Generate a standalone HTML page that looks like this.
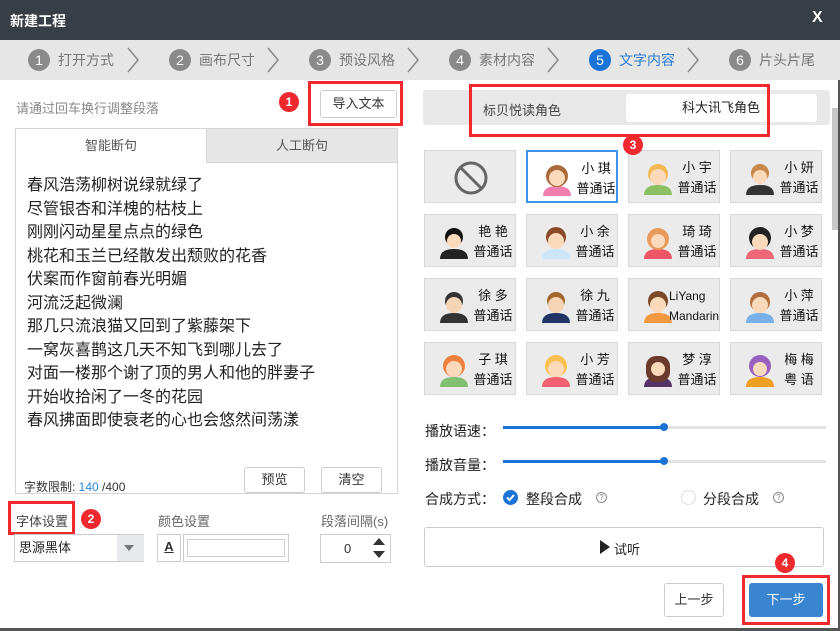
<!DOCTYPE html><html><head><meta charset="utf-8"><style>
*{margin:0;padding:0;box-sizing:border-box}
body{width:840px;height:631px;position:relative;background:#fff;font-family:"Liberation Sans","Noto Sans CJK SC",sans-serif;font-size:13px;color:#333;overflow:hidden}
.a{position:absolute}
.step{position:absolute;top:49px;height:22px;line-height:22px;color:#777;font-size:14px}
.step b{display:inline-block;width:22px;height:22px;border-radius:50%;background:#8a8a8a;color:#fff;text-align:center;font-weight:normal;margin-right:8px;font-size:14px}
.chev{position:absolute;top:47px;width:14px;height:26px}
.btn{position:absolute;border:1px solid #ccc;border-radius:3px;background:#fff;text-align:center;color:#333;font-size:13px}
.red{position:absolute;border:3px solid #f0292f}
.badge{position:absolute;width:20px;height:20px;border-radius:50%;background:#f0292f;color:#fff;text-align:center;line-height:20px;font-size:12px;font-weight:bold}
.cell{position:absolute;width:92px;height:53px;background:#ebebeb;border:1px solid #d6d8de}
.cell svg{position:absolute;left:12px;top:8px}
.cell .t{position:absolute;left:48px;top:7px;font-size:13px;line-height:20px;color:#111;text-align:center;width:40px}
.lines div{height:23.5px;line-height:23.5px;font-size:16px;color:#222}
</style></head><body>
<div class="a" style="left:0;top:0;width:840px;height:40px;background:#383e46"></div>
<div class="a" style="left:10px;top:11px;color:#fff;font-weight:bold;font-size:14px">新建工程</div>
<div class="a" style="left:812px;top:9px;color:#fff;font-weight:bold;font-size:16px">X</div>
<div class="a" style="left:0;top:40px;width:840px;height:40px;background:#e6e6e6"></div>
<div class="step" style="left:28px"><b>1</b>打开方式</div>
<div class="step" style="left:169px"><b>2</b>画布尺寸</div>
<div class="step" style="left:309px"><b>3</b>预设风格</div>
<div class="step" style="left:449px"><b>4</b>素材内容</div>
<div class="step" style="left:589px;color:#2a7ad0"><b style="background:#1a73d6">5</b>文字内容</div>
<div class="step" style="left:729px"><b>6</b>片头片尾</div>
<svg class="chev" style="left:126px" viewBox="0 0 14 26"><path d="M2 1L12 13L2 25" fill="none" stroke="#888" stroke-width="1.5"/></svg>
<svg class="chev" style="left:266px" viewBox="0 0 14 26"><path d="M2 1L12 13L2 25" fill="none" stroke="#888" stroke-width="1.5"/></svg>
<svg class="chev" style="left:406px" viewBox="0 0 14 26"><path d="M2 1L12 13L2 25" fill="none" stroke="#888" stroke-width="1.5"/></svg>
<svg class="chev" style="left:546px" viewBox="0 0 14 26"><path d="M2 1L12 13L2 25" fill="none" stroke="#888" stroke-width="1.5"/></svg>
<svg class="chev" style="left:686px" viewBox="0 0 14 26"><path d="M2 1L12 13L2 25" fill="none" stroke="#888" stroke-width="1.5"/></svg>

<div class="a" style="left:16px;top:98px;color:#888">请通过回车换行调整段落</div>
<div class="badge" style="left:279px;top:92px">1</div>
<div class="btn" style="left:320px;top:90px;width:77px;height:28px;line-height:26px">导入文本</div>
<div class="red" style="left:308px;top:81px;width:95px;height:45px"></div>

<div class="a" style="left:15px;top:128px;width:383px;height:366px;border:1px solid #d5d5d5"></div>
<div class="a" style="left:206px;top:129px;width:191px;height:34px;background:#e6e6e6;border-left:1px solid #d5d5d5;border-bottom:1px solid #d5d5d5;text-align:center;line-height:34px;color:#555">人工断句</div>
<div class="a" style="left:16px;top:129px;width:190px;height:34px;text-align:center;line-height:34px;color:#555">智能断句</div>
<div class="a lines" style="left:27px;top:174px">
<div>春风浩荡柳树说绿就绿了</div><div>尽管银杏和洋槐的枯枝上</div><div>刚刚闪动星星点点的绿色</div><div>桃花和玉兰已经散发出颓败的花香</div><div>伏案而作窗前春光明媚</div><div>河流泛起微澜</div><div>那几只流浪猫又回到了紫藤架下</div><div>一窝灰喜鹊这几天不知飞到哪儿去了</div><div>对面一楼那个谢了顶的男人和他的胖妻子</div><div>开始收拾闲了一冬的花园</div><div>春风拂面即使衰老的心也会悠然间荡漾</div></div>
<div class="a" style="left:24px;top:478px;font-size:12px">字数限制: <span style="color:#2a8ae0">140</span> /400</div>
<div class="btn" style="left:244px;top:467px;width:61px;height:26px;line-height:24px">预览</div>
<div class="btn" style="left:321px;top:467px;width:61px;height:26px;line-height:24px">清空</div>

<div class="a" style="left:16px;top:511px;color:#444">字体设置</div>
<div class="red" style="left:8px;top:501px;width:67px;height:34px"></div>
<div class="badge" style="left:81px;top:509px">2</div>
<div class="a" style="left:158px;top:511px;color:#666">颜色设置</div>
<div class="a" style="left:321px;top:511px;color:#666">段落间隔(s)</div>
<div class="a" style="left:14px;top:534px;width:130px;height:28px;border:1px solid #ccc;background:#fff;line-height:26px;padding-left:4px;color:#222">思源黑体</div>
<div class="a" style="left:117px;top:535px;width:27px;height:26px;background:#e8e9ec"></div>
<div class="a" style="left:124px;top:545px;border:5px solid transparent;border-top:6px solid #777"></div>
<div class="a" style="left:157px;top:534px;width:24px;height:28px;border:1px solid #ccc;text-align:center;line-height:24px;font-weight:bold;text-decoration:underline;color:#333">A</div>
<div class="a" style="left:183px;top:534px;width:106px;height:28px;border:1px solid #ccc"></div>
<div class="a" style="left:187px;top:539px;width:98px;height:18px;border:1px solid #ccc"></div>
<div class="a" style="left:320px;top:534px;width:71px;height:29px;border:1px solid #ccc"></div>
<div class="a" style="left:344px;top:541px">0</div>
<div class="a" style="left:373px;top:538px;border:6px solid transparent;border-bottom:7px solid #333;border-top:0"></div>
<div class="a" style="left:373px;top:551px;border:6px solid transparent;border-top:7px solid #333;border-bottom:0"></div>

<!-- right -->
<div class="a" style="left:423px;top:90px;width:407px;height:35px;background:#e8e8e8;border-radius:3px"></div>
<div class="a" style="left:483px;top:100px;color:#444">标贝悦读角色</div>
<div class="a" style="left:626px;top:94px;width:191px;height:28px;background:#fff;border-radius:3px;text-align:right;padding-right:57px;line-height:28px;color:#222">科大讯飞角色</div>
<div class="red" style="left:469px;top:84px;width:301px;height:53px"></div>
<div class="a" style="left:832px;top:108px;width:6px;height:122px;background:#c8c8c8"></div>
<div class="a" style="left:838px;top:80px;width:2px;height:551px;background:#555"></div>
<div class="a" style="left:0;top:628px;width:840px;height:3px;background:#555"></div>

<div class="cell" style="left:424px;top:150px"><svg style="left:29px;top:10px" width="34" height="34" viewBox="0 0 34 34"><circle cx="17" cy="17" r="15" fill="none" stroke="#666" stroke-width="3"/><path d="M7 7L27 27" stroke="#666" stroke-width="3"/></svg></div>
<div class="cell" style="left:526px;top:150px;background:#fff;border:2px solid #3a95f0"><svg width="34" height="36"><path d="M3 36Q3 26 17 26Q31 26 31 36Z" fill="#f07fae"/><circle cx="17" cy="16" r="11" fill="#a86a3a"/><circle cx="17" cy="18" r="8" fill="#fbd9bb"/></svg><div class="t">小 琪<br>普通话</div></div>
<div class="cell" style="left:628px;top:150px"><svg width="34" height="36"><path d="M3 36Q3 26 17 26Q31 26 31 36Z" fill="#8cc063"/><circle cx="17" cy="15" r="10" fill="#f2b851"/><circle cx="17" cy="18" r="8" fill="#fbd9bb"/></svg><div class="t">小 宇<br>普通话</div></div>
<div class="cell" style="left:730px;top:150px"><svg width="34" height="36"><path d="M3 36Q3 26 17 26Q31 26 31 36Z" fill="#333"/><circle cx="17" cy="14" r="9" fill="#c88a4a"/><circle cx="17" cy="18" r="7" fill="#fbd9bb"/></svg><div class="t">小 妍<br>普通话</div></div>

<div class="cell" style="left:424px;top:214px"><svg width="34" height="36"><path d="M3 36Q3 26 17 26Q31 26 31 36Z" fill="#222"/><circle cx="17" cy="14" r="9" fill="#111"/><circle cx="17" cy="18" r="7" fill="#fbd9bb"/></svg><div class="t">艳 艳<br>普通话</div></div>
<div class="cell" style="left:526px;top:214px"><svg width="34" height="36"><path d="M3 36Q3 26 17 26Q31 26 31 36Z" fill="#cde6f7"/><circle cx="17" cy="14" r="10" fill="#8a4a2a"/><circle cx="17" cy="18" r="8" fill="#fbd9bb"/></svg><div class="t">小 余<br>普通话</div></div>
<div class="cell" style="left:628px;top:214px"><svg width="34" height="36"><path d="M3 36Q3 26 17 26Q31 26 31 36Z" fill="#ee5566"/><circle cx="17" cy="16" r="11" fill="#e89a5a"/><circle cx="17" cy="18" r="7" fill="#fbd9bb"/></svg><div class="t">琦 琦<br>普通话</div></div>
<div class="cell" style="left:730px;top:214px"><svg width="34" height="36"><path d="M3 36Q3 26 17 26Q31 26 31 36Z" fill="#ee6677"/><circle cx="17" cy="15" r="11" fill="#222"/><circle cx="17" cy="19" r="8" fill="#fbd9bb"/></svg><div class="t">小 梦<br>普通话</div></div>

<div class="cell" style="left:424px;top:278px"><svg width="34" height="36"><path d="M3 36Q3 26 17 26Q31 26 31 36Z" fill="#333"/><circle cx="17" cy="14" r="9" fill="#333"/><circle cx="17" cy="18" r="8" fill="#f5d5b5"/></svg><div class="t">徐 多<br>普通话</div></div>
<div class="cell" style="left:526px;top:278px"><svg width="34" height="36"><path d="M3 36Q3 26 17 26Q31 26 31 36Z" fill="#223366"/><circle cx="17" cy="14" r="9" fill="#a0662a"/><circle cx="17" cy="18" r="8" fill="#f5d5b5"/></svg><div class="t">徐 九<br>普通话</div></div>
<div class="cell" style="left:628px;top:278px"><svg width="34" height="36"><path d="M3 36Q3 26 17 26Q31 26 31 36Z" fill="#f39a40"/><circle cx="17" cy="14" r="10" fill="#7a4a2a"/><circle cx="17" cy="18" r="8" fill="#fbd9bb"/></svg><div class="t" style="left:40px;width:50px;text-align:left;font-size:12px">LiYang<br>Mandarin</div></div>
<div class="cell" style="left:730px;top:278px"><svg width="34" height="36"><path d="M3 36Q3 26 17 26Q31 26 31 36Z" fill="#7ab0e8"/><circle cx="17" cy="15" r="10" fill="#b07040"/><circle cx="17" cy="18" r="8" fill="#fbd9bb"/></svg><div class="t">小 萍<br>普通话</div></div>

<div class="cell" style="left:424px;top:342px"><svg width="34" height="36"><path d="M3 36Q3 26 17 26Q31 26 31 36Z" fill="#80c070"/><circle cx="17" cy="15" r="11" fill="#f08040"/><circle cx="17" cy="18" r="8" fill="#fbd9bb"/></svg><div class="t">子 琪<br>普通话</div></div>
<div class="cell" style="left:526px;top:342px"><svg width="34" height="36"><path d="M3 36Q3 26 17 26Q31 26 31 36Z" fill="#f06070"/><circle cx="17" cy="15" r="11" fill="#f8c050"/><circle cx="17" cy="18" r="8" fill="#fbd9bb"/></svg><div class="t">小 芳<br>普通话</div></div>
<div class="cell" style="left:628px;top:342px"><svg width="34" height="36"><path d="M3 36Q3 26 17 26Q31 26 31 36Z" fill="#553366"/><rect x="5" y="5" width="24" height="26" rx="10" fill="#6a3a2a"/><circle cx="17" cy="18" r="7" fill="#fbd9bb"/></svg><div class="t">梦 淳<br>普通话</div></div>
<div class="cell" style="left:730px;top:342px"><svg width="34" height="36"><path d="M3 36Q3 26 17 26Q31 26 31 36Z" fill="#f0a020"/><circle cx="17" cy="15" r="11" fill="#9a60c0"/><circle cx="17" cy="18" r="7" fill="#fbd9bb"/></svg><div class="t">梅 梅<br>粤 语</div></div>
<div class="badge" style="left:623px;top:135px">3</div>

<div class="a" style="left:425px;top:421px;font-size:14px;color:#222">播放语速：</div>
<div class="a" style="left:503px;top:426px;width:323px;height:3px;background:#e3e3e3"></div>
<div class="a" style="left:503px;top:426px;width:161px;height:3px;background:#1a73d6"></div>
<div class="a" style="left:660px;top:423px;width:8px;height:8px;border-radius:50%;background:#1a73d6"></div>
<div class="a" style="left:425px;top:455px;font-size:14px;color:#222">播放音量：</div>
<div class="a" style="left:503px;top:460px;width:323px;height:3px;background:#e3e3e3"></div>
<div class="a" style="left:503px;top:460px;width:161px;height:3px;background:#1a73d6"></div>
<div class="a" style="left:660px;top:457px;width:8px;height:8px;border-radius:50%;background:#1a73d6"></div>
<div class="a" style="left:425px;top:489px;font-size:14px;color:#222">合成方式：</div>
<svg class="a" style="left:503px;top:490px" width="15" height="15"><circle cx="7.5" cy="7.5" r="7.5" fill="#1a73d6"/><path d="M4 7.5L6.5 10L11 5" stroke="#fff" stroke-width="2" fill="none"/></svg>
<div class="a" style="left:526px;top:489px;font-size:14px;color:#222">整段合成</div>
<div class="a" style="left:596px;top:492px;width:11px;height:11px;border:1px solid #888;border-radius:50%;font-size:8px;text-align:center;line-height:9px;color:#777">?</div>
<div class="a" style="left:681px;top:490px;width:15px;height:15px;border:1px solid #ddd;border-radius:50%"></div>
<div class="a" style="left:703px;top:489px;font-size:14px;color:#222">分段合成</div>
<div class="a" style="left:773px;top:492px;width:11px;height:11px;border:1px solid #888;border-radius:50%;font-size:8px;text-align:center;line-height:9px;color:#777">?</div>
<div class="btn" style="left:424px;top:527px;width:400px;height:40px"></div>
<div class="a" style="left:600px;top:540px;border:7px solid transparent;border-left:10px solid #222;border-right:0"></div>
<div class="a" style="left:614px;top:539px;font-size:13px;color:#222">试听</div>
<div class="btn" style="left:664px;top:583px;width:60px;height:34px;line-height:32px">上一步</div>
<div class="a" style="left:749px;top:583px;width:74px;height:34px;background:#3a85d0;border-radius:3px;color:#fff;text-align:center;line-height:34px">下一步</div>
<div class="red" style="left:742px;top:575px;width:88px;height:50px"></div>
<div class="badge" style="left:775px;top:553px">4</div>
</body></html>
